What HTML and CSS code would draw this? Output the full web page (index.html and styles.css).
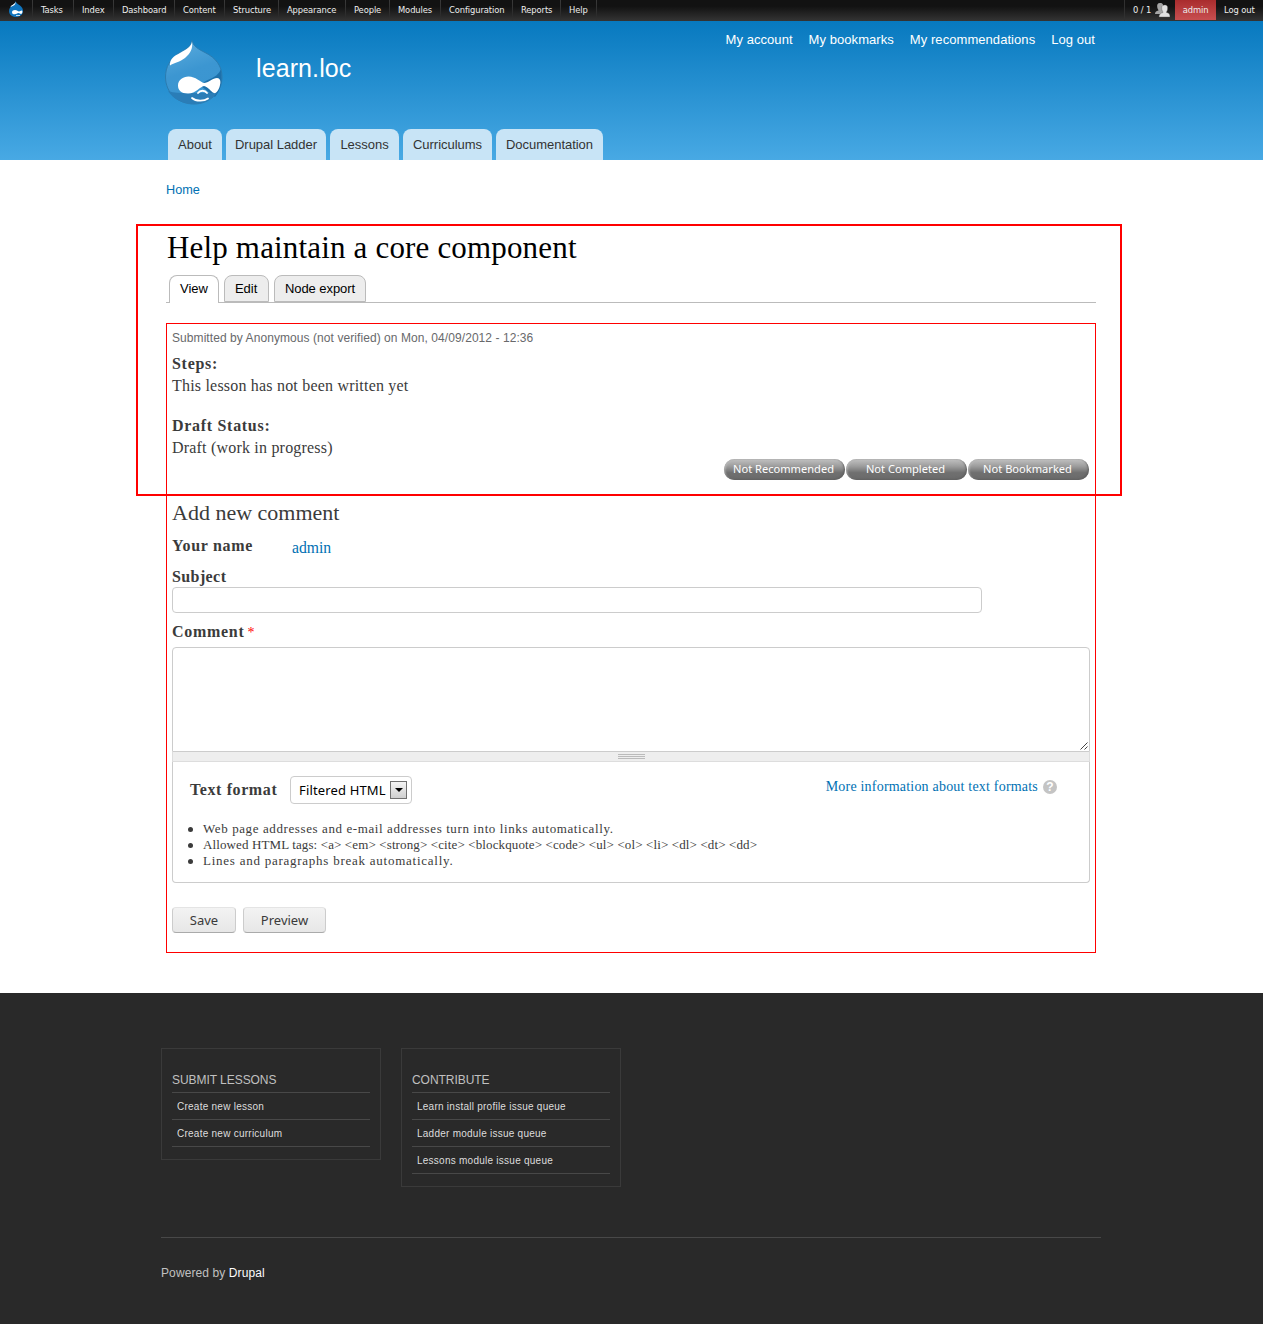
FILE: index.html
```html
<!DOCTYPE html>
<html lang="en">
<head>
    <meta charset="UTF-8">
    <title>Help maintain a core component | learn.loc</title>
    <link rel="stylesheet" href="styles.css">
</head>
<body>
    <svg width="0" height="0" class="defs">
        <defs>
            <linearGradient id="dropFill" x1="0.2" y1="0" x2="0.5" y2="1">
                <stop offset="0" stop-color="#5aabdd"/>
                <stop offset="0.5" stop-color="#3c96d1"/>
                <stop offset="1" stop-color="#3a95d0"/>
            </linearGradient>
            <symbol id="drop" viewBox="0 0 58 65">
                <path fill="url(#dropFill)" stroke="#2b7cb0" stroke-width="1" d="M27 .5C28 6 33 9 40 12.500C51 18 57 26 57 37C57 53 44 64 29 64C13 64 .5 53 .5 37C.5 27 5 19 14 13C21 9 26 7 27 .5Z"/>
                <path fill="#1d70aa" d="M56 29C54 34 50 37 45 39C40 41 37 43 36 46L50 57C56 50 57 42 56.500 35Z"/>
                <path fill="#2a7db7" d="M3 51C9 53 16 53 22 53L52 53C46 60 38 64 29 64C18 64 8 59 3 51Z"/>
                <path fill="#fff" d="M27 1.500C28 8 26 13 20 18C15 22 9 23 5 25.500C4.500 19 9 16 15 13C22 9 26 7 27 1.500Z"/>
                <path fill="#fff" d="M23.500 36.500C31 36.500 35 42 39 43C43 43 48 38 52 38C55 38 56 41 55 45C54 50 51 54 49 53C46 52 43 46.500 39 46C35 46.500 31 53.500 23 53.500C16 53.500 13 50 13 45.500C13 40 18 36.500 23.500 36.500Z"/>
                <path fill="none" stroke="#fff" stroke-width="1.800" stroke-linecap="round" d="M33 53C35 50 40 50 42 53M27 58C31 61.500 39 61.500 43 58.500"/>
            </symbol>
            <symbol id="drop-small" viewBox="0 0 14 16">
                <path fill="#0f74bd" d="M6.500 0C7 2 9 3 11 4.500C13 6 14 8 14 10C14 13.500 11 16 7 16C3 16 0 13.500 0 10C0 7.500 1.500 5.500 3.500 4C5.500 3 6.500 2 6.500 0Z"/>
                <path fill="#fff" d="M6.500 1C7 3 5 5 1.500 6C2 4 5 4 6.500 1Z"/>
                <path fill="#fff" d="M6 9C8 9 9 10.500 10 10.500C11 10.500 12 9.300 13 9.500C14 10.500 13 13 12 13C11 13 10.500 12 9.500 12C8 12 7.500 13.300 5.500 13.300C4 13.300 3 12.500 3 11.200C3 9.800 4.500 9 6 9ZM7 14.300H11V15H7Z"/>
            </symbol>
        </defs>
    </svg>

    <div id="admin-menu">
        <ul class="menu-left">
            <li class="admin-home"><svg width="14" height="16"><use href="#drop-small"/></svg></li>
            <li>Tasks</li>
            <li>Index</li>
            <li>Dashboard</li>
            <li>Content</li>
            <li>Structure</li>
            <li>Appearance</li>
            <li>People</li>
            <li>Modules</li>
            <li>Configuration</li>
            <li>Reports</li>
            <li>Help</li>
        </ul>
        <ul class="menu-right">
            <li class="users">0 / 1
                <svg width="15" height="16" viewBox="0 0 15 16">
                    <path fill="#a5a5a5" d="M5 1C8 1 8.500 3 8 5.500C7.800 7 7 7.500 7 8.500C9 9.500 10 10 10 12H0C0 10 1 9 3.500 8.500C3.500 7.500 2.500 7 2.300 5.500C1.800 3 2.500 1 5 1Z"/>
                    <path fill="#e2e2e2" stroke="#555" stroke-width=".4" d="M9.500 3C12.500 3 13 5 12.500 7.500C12.300 9 11.500 9.500 11.500 10.500C14 11 15 12 15 15H4C4 12.500 5.500 11 8 10.500C8 9.500 7 9 6.800 7.500C6.300 5 7 3 9.500 3Z"/>
                </svg>
            </li>
            <li class="account">admin</li>
            <li class="logout">Log out</li>
        </ul>
    </div>

    <div id="header">
        <div class="branding">
            <svg class="logo" width="58" height="65"><use href="#drop"/></svg>
            <div class="site-name">learn.loc</div>
            <ul class="secondary-menu">
                <li>My account</li>
                <li>My bookmarks</li>
                <li>My recommendations</li>
                <li>Log out</li>
            </ul>
        </div>
        <ul class="main-menu">
            <li>About</li>
            <li>Drupal Ladder</li>
            <li>Lessons</li>
            <li>Curriculums</li>
            <li>Documentation</li>
        </ul>
    </div>

    <div id="main">
        <div class="breadcrumb">Home</div>
        <div class="highlight"></div>
        <h1 class="title">Help maintain a core component</h1>
        <ul class="tabs">
            <li class="active">View</li>
            <li>Edit</li>
            <li>Node export</li>
        </ul>

        <div class="node">
            <div class="submitted">Submitted by Anonymous (not verified) on Mon, 04/09/2012 - 12:36</div>
            <div class="field">
                <div class="label">Steps:</div>
                <div class="value">This lesson has not been written yet</div>
            </div>
            <div class="field">
                <div class="label">Draft Status:</div>
                <div class="value">Draft (work in progress)</div>
            </div>
            <div class="flags">
                <span>Not Recommended</span>
                <span>Not Completed</span>
                <span>Not Bookmarked</span>
            </div>

            <h2 class="comment-title">Add new comment</h2>
            <form class="comment-form">
                <div class="author">
                    <span class="label">Your name</span>
                    <a class="username">admin</a>
                </div>
                <label class="label subject-label" for="subject">Subject</label>
                <input type="text" id="subject">
                <label class="label">Comment<span class="required">*</span></label>
                <div class="textarea">
                    <svg width="8" height="8" viewBox="0 0 8 8"><path stroke="#444" stroke-width="1" d="M0.500 7.500L7.500 0.500M4.500 7.500L7.500 4.500"/></svg>
                </div>
                <div class="grippie"><i></i></div>
                <div class="filter-wrapper">
                    <div class="format-row">
                        <span class="label">Text format</span>
                        <div class="select"><span>Filtered HTML</span><b><i></i></b></div>
                        <div class="help"><a>More information about text formats</a><span class="question">?</span></div>
                    </div>
                    <ul class="tips">
                        <li class="tip-links">Web page addresses and e-mail addresses turn into links automatically.</li>
                        <li class="tip-tags">Allowed HTML tags: &lt;a&gt; &lt;em&gt; &lt;strong&gt; &lt;cite&gt; &lt;blockquote&gt; &lt;code&gt; &lt;ul&gt; &lt;ol&gt; &lt;li&gt; &lt;dl&gt; &lt;dt&gt; &lt;dd&gt;</li>
                        <li class="tip-lines">Lines and paragraphs break automatically.</li>
                    </ul>
                </div>
                <div class="actions">
                    <button type="button" class="save">Save</button>
                    <button type="button" class="preview">Preview</button>
                </div>
            </form>
        </div>
    </div>

    <div id="footer">
        <div class="columns">
            <div class="block">
                <h2>Submit lessons</h2>
                <ul>
                    <li>Create new lesson</li>
                    <li>Create new curriculum</li>
                </ul>
            </div>
            <div class="block">
                <h2>Contribute</h2>
                <ul>
                    <li>Learn install profile issue queue</li>
                    <li>Ladder module issue queue</li>
                    <li>Lessons module issue queue</li>
                </ul>
            </div>
        </div>
        <div class="powered">Powered by <a>Drupal</a></div>
    </div>
</body>
</html>
```
FILE: styles.css
```css
* {
    box-sizing: border-box;
}
body {
    margin: 0;
    background: #fff;
    color: #3b3b3b;
    font-family: "Liberation Serif", serif;
    font-size: 16px;
}
ul {
    list-style: none;
    margin: 0;
    padding: 0;
}
h1, h2 {
    margin: 0;
    font-weight: normal;
}
.defs {
    position: absolute;
}

/* Admin bar */
#admin-menu {
    display: flex;
    justify-content: space-between;
    height: 21px;
    background: linear-gradient(#121212, #121212 30%, #343434);
    color: #eee;
    font: 9.3px/20px "DejaVu Sans Condensed", "DejaVu Sans", sans-serif;
    letter-spacing: -0.1px;
    white-space: nowrap;
}
.menu-left {
    display: grid;
    grid-template-columns: 33px 41px 40px 61px 50px 54px 67px 44px 51px 72px 48px 36px;
}
.menu-left li {
    padding-left: 8px;
    border-right: 1px solid;
    border-image: linear-gradient(#3a3a3a, #2b2b2b 75%, #343434) 1;
}
.menu-left .admin-home {
    padding-left: 9px;
}
.menu-left svg {
    display: block;
    margin-top: 1px;
}
.menu-right {
    display: grid;
    grid-template-columns: 51px 41px 47px;
}
.users {
    display: flex;
    gap: 4px;
    padding-left: 8px;
    border-left: 1px solid #303030;
}
.users svg {
    margin-top: 2px;
    flex: none;
}
.account {
    height: 20px;
    text-align: center;
    background: linear-gradient(#a92c2d, #c84f50);
}
.logout {
    padding-left: 8px;
}

/* Header */
#header {
    display: flex;
    flex-direction: column;
    justify-content: space-between;
    height: 139px;
    padding: 0 168px 0 165px;
    background: linear-gradient(#0779bf, #48a9e4);
    font-family: "Liberation Sans", sans-serif;
}
.branding {
    display: flex;
    align-items: flex-start;
}
.logo {
    margin-top: 19px;
}
.site-name {
    margin: 32px 0 0 33px;
    color: #fff;
    font-size: 25px;
    line-height: 30px;
    letter-spacing: 0.1px;
}
.secondary-menu {
    display: flex;
    gap: 16px;
    margin: 10px 0 0 auto;
    color: #fff;
    font-size: 13px;
    line-height: 18px;
    letter-spacing: 0.06px;
}
.main-menu {
    display: grid;
    grid-template-columns: 54px 100px 69px 89px 107px;
    gap: 4px;
    margin-left: 3px;
}
.main-menu li {
    height: 31px;
    border-radius: 8px 8px 0 0;
    background: #c8e4f6;
    color: #333;
    font-size: 13px;
    line-height: 31px;
    letter-spacing: -0.03px;
    text-align: center;
}

/* Page */
#main {
    position: relative;
    width: 930px;
    margin-left: 166px;
    padding-bottom: 40px;
}
.breadcrumb {
    padding: 21px 0 29px;
    color: #0071b3;
    font: 12.7px/19px "Liberation Sans", sans-serif;
}
.highlight {
    position: absolute;
    z-index: 2;
    left: -30px;
    top: 64px;
    width: 986px;
    height: 272px;
    border: 2px solid #f00;
    pointer-events: none;
}
.title {
    padding-left: 1px;
    color: #000;
    font-size: 31px;
    line-height: 38px;
    letter-spacing: 0.17px;
    white-space: nowrap;
}
.tabs {
    display: flex;
    gap: 5px;
    height: 36px;
    padding: 8px 0 0 3px;
    border-bottom: 1px solid #bbb;
    margin-bottom: 20px;
    color: #000;
    font: 13px/26px "Liberation Sans", sans-serif;
}
.tabs li {
    height: 27px;
    min-width: 45px;
    padding: 0 10px;
    border: 1px solid #bbb;
    border-radius: 8px 8px 0 0;
    background: #ededed;
}
.tabs li:last-child {
    letter-spacing: -0.06px;
}
.tabs .active {
    height: 28px;
    border-bottom: 0;
    background: #fff;
}

.node {
    height: 630px;
    padding: 3px 5px 0;
    border: 1px solid #f00;
}
.submitted {
    margin-bottom: 4px;
    color: #68696b;
    font: 12px/22px "Liberation Sans", sans-serif;
    letter-spacing: 0.07px;
}
.field {
    line-height: 22px;
    margin-bottom: 18px;
}
.label {
    display: block;
    font-weight: bold;
    letter-spacing: 0.7px;
}
.value {
    letter-spacing: 0.2px;
}
.flags {
    display: flex;
    justify-content: flex-end;
    gap: 1px;
    margin: -18px 1px 20px 0;
}
.flags span {
    width: 121px;
    height: 21px;
    padding-right: 2px;
    border-radius: 11px;
    background: linear-gradient(#c2c2c2, #9c9c9c 35%, #707070 65%, #6a6a6a);
    box-shadow: inset -1px -1px 2px #606060, inset 1px 1px 2px #b8b8b8;
    color: #fff;
    font: 11.1px/20px "Noto Sans", sans-serif;
    text-align: center;
}
.comment-title {
    font-size: 22px;
    line-height: 26px;
    margin-bottom: 9px;
}
.author {
    display: flex;
    line-height: 22px;
    margin-bottom: 10px;
}
.author .label {
    width: 120px;
}
.username {
    height: 22px;
    color: #0071b3;
    font-size: 15.7px;
    line-height: 25px;
}
.comment-form > label {
    height: 20px;
    line-height: 20px;
}
.comment-form .subject-label {
    letter-spacing: 0.4px;
}
.required {
    margin-left: 3px;
    color: #f00;
    font-size: 14px;
    font-weight: normal;
}
#subject {
    display: block;
    width: 810px;
    height: 26px;
    margin-bottom: 9px;
    border: 1px solid #ccc;
    border-radius: 4px;
}
.textarea {
    display: flex;
    justify-content: flex-end;
    align-items: flex-end;
    height: 105px;
    margin-top: 5px;
    padding: 1px;
    border: 1px solid #ccc;
    border-radius: 4px 4px 0 0;
}
.grippie {
    display: flex;
    justify-content: center;
    height: 10px;
    padding-top: 2px;
    border: 1px solid #ddd;
    border-top: 0;
    background: #eee;
}
.grippie i {
    width: 27px;
    height: 5px;
    background: repeating-linear-gradient(#bbb 0 1px, #eee 1px 2px);
}
.filter-wrapper {
    height: 121px;
    padding: 14px 32px 0 17px;
    border: 1px solid #ccc;
    border-top: 0;
    border-radius: 0 0 4px 4px;
}
.format-row {
    display: flex;
    line-height: 28px;
}
.format-row .label {
    width: 100px;
    letter-spacing: 0.6px;
}
.select {
    display: flex;
    align-items: center;
    justify-content: space-between;
    width: 122px;
    height: 28px;
    padding: 0 4px 0 8px;
    border: 1px solid #ccc;
    border-radius: 4px;
    color: #000;
    font: 13px/26px "Noto Sans", sans-serif;
    letter-spacing: 0.15px;
    white-space: nowrap;
}
.select b {
    display: flex;
    align-items: center;
    justify-content: center;
    width: 17px;
    height: 18px;
    border: 1px solid #707070;
    background: linear-gradient(#f4f4f4, #cfcfcf);
}
.select i {
    border: 4px solid transparent;
    border-top-color: #000;
    border-bottom: 0;
}
.help {
    display: flex;
    align-items: center;
    gap: 5px;
    height: 22px;
    margin-left: auto;
    color: #0071b3;
    font-size: 14px;
    letter-spacing: 0.2px;
}
.question {
    width: 14px;
    height: 14px;
    border-radius: 50%;
    background: #c4c4c4;
    color: #fff;
    font: bold 12px/14px "Liberation Sans", sans-serif;
    text-align: center;
}
.tips {
    margin-top: 17px;
    padding-left: 13px;
    font-size: 13px;
    line-height: 16px;
    white-space: nowrap;
}
.tips li::before {
    content: "";
    display: inline-block;
    width: 5px;
    height: 5px;
    margin: 0 10px 1px -15px;
    border-radius: 50%;
    background: #3b3b3b;
}
.tip-links {
    letter-spacing: 0.6px;
}
.tip-tags {
    letter-spacing: 0.12px;
}
.tip-lines {
    letter-spacing: 0.75px;
}
.actions {
    display: flex;
    gap: 7px;
    margin-top: 24px;
}
.actions button {
    height: 26px;
    padding: 0;
    border: 1px solid #ccc;
    border-top-color: #e4e4e4;
    border-bottom-color: #aaa;
    border-radius: 4px;
    background: linear-gradient(#f3f3f3, #e7e7e7);
    color: #3a3a3a;
    font: 13px/24px "Noto Sans", sans-serif;
}
.save {
    width: 64px;
}
.preview {
    width: 83px;
}

/* Footer */
#footer {
    height: 331px;
    padding: 55px 162px 0 161px;
    background: #292929;
    color: #c0c0c0;
    font-family: "Liberation Sans", sans-serif;
}
.columns {
    display: flex;
    align-items: flex-start;
    gap: 20px;
    height: 189px;
}
.block {
    width: 220px;
    padding: 20px 10px 12px;
    border: 1px solid #3a3a3a;
}
.block h2 {
    height: 24px;
    border-bottom: 1px solid #484848;
    font-size: 12px;
    line-height: 22px;
    letter-spacing: -0.05px;
    text-transform: uppercase;
}
.block li {
    height: 27px;
    padding-left: 5px;
    border-bottom: 1px solid #484848;
    color: #ddd;
    font-size: 10px;
    line-height: 27px;
    letter-spacing: 0.25px;
}
.powered {
    padding-top: 25px;
    border-top: 1px solid #484848;
    font-size: 12px;
    line-height: 20px;
    letter-spacing: 0.1px;
}
.powered a {
    color: #fcfcfc;
}
```
